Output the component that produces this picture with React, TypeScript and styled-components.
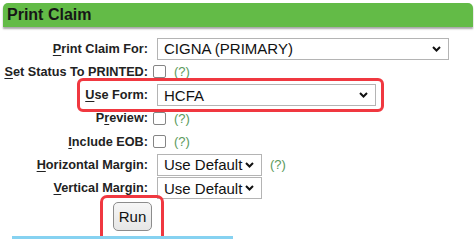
import styled, { createGlobalStyle } from 'styled-components'

const GlobalStyle = createGlobalStyle`
  html, body {
    margin: 0;
    padding: 0;
    background: #ffffff;
    font-family: 'Liberation Sans', Arial, sans-serif;
    overflow: hidden;
  }
`

const Page = styled.div`
  width: 474px;
  height: 239px;
  position: relative;
  overflow: hidden;
`

const Header = styled.div`
  margin: 3px 1px 0 3px;
  height: 24px;
  display: flex;
  align-items: center;
  padding-left: 4px;
  background: #63bb47;
  border-radius: 5px 5px 0 0;
  box-shadow: 0 2px 2px rgba(0, 0, 0, 0.35);
  font-size: 16px;
  font-weight: 700;
  color: #161616;
`

const Form = styled.div`
  padding-top: 10px;
  display: flex;
  flex-direction: column;
`

const Row = styled.div<{ highlight?: boolean }>`
  position: relative;
  height: 23.25px;
  display: flex;
  align-items: center;

  ${(p) => p.highlight && `
    &::after {
      content: '';
      position: absolute;
      left: 77px;
      top: -6px;
      width: 301px;
      height: 28px;
      border: 3px solid #f03840;
      border-radius: 6px;
      pointer-events: none;
    }
  `}
`

const Label = styled.label`
  width: 148px;
  flex: none;
  text-align: right;
  font-size: 12.7px;
  font-weight: 700;
  color: #222;
  white-space: nowrap;

  u {
    text-decoration: underline;
    text-underline-offset: 2px;
  }
`

const Check = styled.span`
  box-sizing: border-box;
  width: 13px;
  height: 13px;
  margin-left: 5px;
  border: 1px solid #858585;
  border-radius: 2px;
  background: #fff;
`

const Help = styled.span`
  margin-left: 8px;
  font-size: 13px;
  color: #5a9a5a;
`

const Select = styled.div<{ width: number }>`
  box-sizing: border-box;
  margin-left: 9px;
  width: ${(p) => p.width}px;
  height: 22px;
  display: flex;
  align-items: center;
  justify-content: space-between;
  padding: 0 7px 0 6px;
  border: 1px solid #b4b4b4;
  background: #fff;
  font-size: 15px;
  color: #111;
  white-space: nowrap;
`

const Chevron = () => (
  <svg width="9" height="6" viewBox="0 0 9 6">
    <path d="M1 1 L4.5 4.5 L8 1" fill="none" stroke="#111" strokeWidth="2" />
  </svg>
)

const RunRow = styled.div`
  position: relative;
  padding: 2px 0 0 113px;

  &::after {
    content: '';
    position: absolute;
    left: 100px;
    top: -5px;
    width: 58px;
    height: 48px;
    border: 3px solid #f03840;
    border-radius: 7px;
    pointer-events: none;
  }
`

const Button = styled.button`
  box-sizing: border-box;
  width: 39px;
  height: 29px;
  padding: 0;
  border: 1px solid #8c8c8c;
  border-radius: 5px;
  background: linear-gradient(#f6f6f6, #e6e6e6);
  font-family: 'Liberation Sans', Arial, sans-serif;
  font-size: 15px;
  color: #111;
`

const BlueBar = styled.div`
  position: absolute;
  left: 12px;
  bottom: 0;
  width: 221px;
  height: 3px;
  background: #86d2f1;
`

export default function App() {
  return (
    <>
      <GlobalStyle />
      <Page>
        <Header>Print Claim</Header>
        <Form>
          <Row>
            <Label><u>P</u>rint Claim For:</Label>
            <Select width={292}>CIGNA (PRIMARY)<Chevron /></Select>
          </Row>
          <Row>
            <Label><u>S</u>et Status To PRINTED:</Label>
            <Check />
            <Help>(?)</Help>
          </Row>
          <Row highlight>
            <Label><u>U</u>se Form:</Label>
            <Select width={219}>HCFA<Chevron /></Select>
          </Row>
          <Row>
            <Label>P<u>r</u>eview:</Label>
            <Check />
            <Help>(?)</Help>
          </Row>
          <Row>
            <Label><u>I</u>nclude EOB:</Label>
            <Check />
            <Help>(?)</Help>
          </Row>
          <Row>
            <Label><u>H</u>orizontal Margin:</Label>
            <Select width={105}>Use Default<Chevron /></Select>
            <Help>(?)</Help>
          </Row>
          <Row>
            <Label><u>V</u>ertical Margin:</Label>
            <Select width={105}>Use Default<Chevron /></Select>
          </Row>
          <RunRow>
            <Button>Run</Button>
          </RunRow>
        </Form>
        <BlueBar />
      </Page>
    </>
  )
}
